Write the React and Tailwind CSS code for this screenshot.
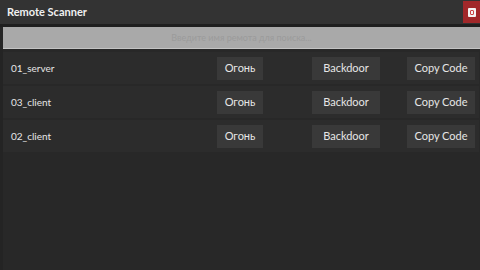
export default function App() {
  const rows = ["01_server", "03_client", "02_client"];
  return (
    <div className="w-[480px] h-[270px] bg-[#282828] flex flex-col overflow-hidden" style={{ fontFamily: "Lato, 'Noto Sans', sans-serif" }}>
      <div className="h-[24px] bg-[#333333] flex items-center justify-between shrink-0">
        <span className="pl-[7px] text-[11px] font-bold text-[#f0f0f0]">Remote Scanner</span>
        <div className="w-[17px] h-[22px] bg-[#a1282a] flex items-center justify-center self-end mb-[1px]">
          <div className="w-[8px] h-[9px] bg-[#f4f4f4] rounded-[1px] flex items-center justify-center">
            <div className="w-[4px] h-[5px] border border-[#c44] rounded-[1px]"></div>
          </div>
        </div>
      </div>
      <div className="h-[3px] bg-[#1f1f1f] shrink-0"></div>
      <div className="flex shrink-0">
        <div className="w-[3px] bg-[#262626]"></div>
        <div className="flex-1 h-[22px] bg-[#a9a9a9] border-b border-[#c4c4c4] flex items-center justify-center text-[9px] text-[#9b9b9b]">
          Введите имя ремота для поиска...
        </div>
      </div>
      <div className="flex flex-1">
        <div className="w-[3px] bg-[#242424]"></div>
        <div className="flex-1 flex flex-col gap-[2px] pt-[3px] pr-[1px]">
          {rows.map((r) => (
            <div key={r} className="h-[32px] bg-[#2c2c2c] flex items-center text-[#e6e6e6]">
              <span className="pl-[8px] text-[10px] w-[214px]">{r}</span>
              <div className="w-[46px] h-[23px] bg-[#393939] flex items-center justify-center text-[11px]">Огонь</div>
              <div className="w-[49px]"></div>
              <div className="w-[68px] h-[23px] bg-[#393939] flex items-center justify-center text-[11px]">Backdoor</div>
              <div className="w-[27px]"></div>
              <div className="w-[68px] h-[23px] bg-[#393939] flex items-center justify-center text-[11px]">Copy Code</div>
            </div>
          ))}
        </div>
      </div>
    </div>
  );
}
